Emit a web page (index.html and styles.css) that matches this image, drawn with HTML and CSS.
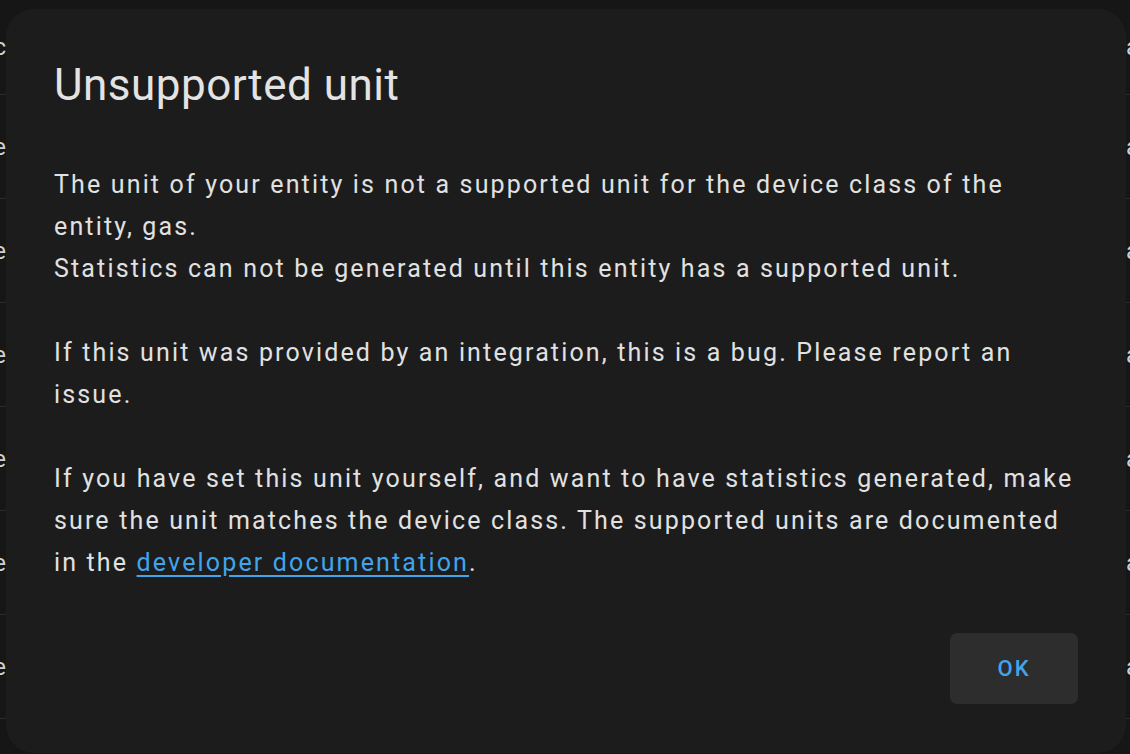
FILE: index.html
```html
<!DOCTYPE html>
<html>
<head>
<meta charset="utf-8">
<link rel="stylesheet" href="styles.css">
</head>
<body>
<div class="page">
  <div class="table">
    <div class="row"><div class="cell-left"><span>Name of sensor c</span></div><div class="cell-mid"></div><div class="cell-right">a</div></div>
    <div class="row"><div class="cell-left"><span>Name of sensor e</span></div><div class="cell-mid"></div><div class="cell-right">a</div></div>
    <div class="row"><div class="cell-left"><span>Name of sensor e</span></div><div class="cell-mid"></div><div class="cell-right">a</div></div>
    <div class="row"><div class="cell-left"><span>Name of sensor e</span></div><div class="cell-mid"></div><div class="cell-right">a</div></div>
    <div class="row"><div class="cell-left"><span>Name of sensor e</span></div><div class="cell-mid"></div><div class="cell-right">a</div></div>
    <div class="row"><div class="cell-left"><span>Name of sensor e</span></div><div class="cell-mid"></div><div class="cell-right">a</div></div>
    <div class="row"><div class="cell-left"><span>Name of sensor e</span></div><div class="cell-mid"></div><div class="cell-right">a</div></div>
    <div class="row"><div class="cell-left"><span>Name of sensor e</span></div><div class="cell-mid"></div><div class="cell-right">a</div></div>
  </div>

  <div class="dialog">
    <h2 class="title">Unsupported unit</h2>
    <div class="content">
      <p>The unit of your entity is not a supported unit for the device class of the entity, gas.<br>Statistics can not be generated until this entity has a supported unit.</p>
      <p>If this unit was provided by an integration, this is a bug. Please report an issue.</p>
      <p>If you have set this unit yourself, and want to have statistics generated, make sure the unit matches the device class. The supported units are documented in the <a href="#">developer documentation</a>.</p>
    </div>
    <div class="actions">
      <button class="btn">OK</button>
    </div>
  </div>
</div>
</body>
</html>
```

FILE: styles.css
```css
* { box-sizing: border-box; }
html, body {
  margin: 0;
  padding: 0;
  width: 1130px;
  height: 754px;
  overflow: hidden;
  background: #141414;
  font-family: Roboto, "Liberation Sans", sans-serif;
}
.page {
  position: relative;
  width: 1130px;
  height: 754px;
  overflow: hidden;
}
.table {
  display: flex;
  flex-direction: column;
}
.row {
  display: flex;
  height: 104px;
  border-top: 1px solid #2a2a2a;
  align-items: center;
  color: #d0d0d0;
  font-size: 24px;
  background: #161616;
}
.row:first-child {
  height: 94px;
  border-top: none;
}
.cell-left {
  width: 6px;
  overflow: hidden;
  display: flex;
  justify-content: flex-end;
  white-space: nowrap;
  flex: none;
}
.cell-left span { flex: none; }
.cell-mid { flex: 1; }
.cell-right {
  width: 4px;
  overflow: hidden;
  flex: none;
  white-space: nowrap;
}

.dialog {
  position: absolute;
  left: 6px;
  top: 9px;
  width: 1120px;
  height: 744px;
  background: #1c1c1c;
  border-radius: 28px;
  padding: 0 48px 49px 48px;
  display: flex;
  flex-direction: column;
  color: #e1e1e1;
}
.title {
  margin: 0;
  font-weight: 400;
  font-size: 44px;
  line-height: 48px;
  padding-top: 52px;
  letter-spacing: 0.5px;
  color: #e3e3e3;
}
.content {
  margin-top: 55px;
  font-size: 25px;
  line-height: 42px;
  letter-spacing: 2.15px;
}
.content p {
  margin: 0 0 42px 0;
}
.content p:last-child { margin-bottom: 0; }
.content a {
  color: #41a5ec;
  text-decoration: underline;
  text-underline-offset: 4px;
}
.actions {
  margin-top: auto;
  display: flex;
  justify-content: flex-end;
}
.btn {
  width: 128px;
  height: 71px;
  border: none;
  border-radius: 7px;
  background: #2d2d2d;
  color: #41a5ec;
  font-family: Roboto, "Liberation Sans", sans-serif;
  font-weight: 500;
  font-size: 22px;
  letter-spacing: 2px;
  padding: 0;
}
```
